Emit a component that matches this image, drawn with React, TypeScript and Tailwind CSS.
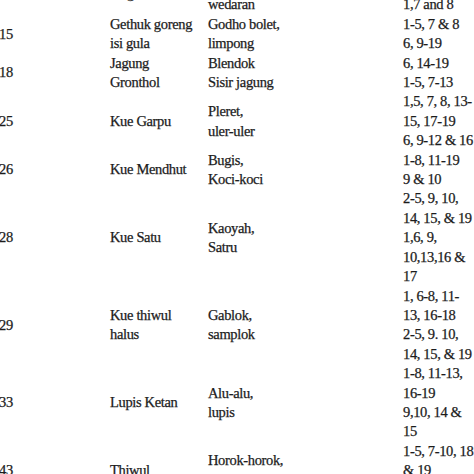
type Row = {
  no: string;
  name: string[];
  local: string[];
  sites: string[];
  lift?: boolean;
};

const rows: Row[] = [
  { no: "", name: ["Ang"], local: ["Gethuk", "wedaran"], sites: ["9-19", "1,7 and 8"], lift: true },
  { no: "15", name: ["Gethuk goreng", "isi gula"], local: ["Godho bolet,", "limpong"], sites: ["1-5, 7 & 8", "6, 9-19"] },
  { no: "18", name: ["Jagung", "Gronthol"], local: ["Blendok", "Sisir jagung"], sites: ["6, 14-19", "1-5, 7-13"] },
  { no: "25", name: ["Kue Garpu"], local: ["Pleret,", "uler-uler"], sites: ["1,5, 7, 8, 13-", "15, 17-19", "6, 9-12 & 16"] },
  { no: "26", name: ["Kue Mendhut"], local: ["Bugis,", "Koci-koci"], sites: ["1-8, 11-19", "9 & 10"] },
  {
    no: "28",
    name: ["Kue Satu"],
    local: ["Kaoyah,", "Satru"],
    sites: ["2-5, 9, 10,", "14, 15, & 19", "1,6, 9,", "10,13,16 &", "17"],
  },
  {
    no: "29",
    name: ["Kue thiwul", "halus"],
    local: ["Gablok,", "samplok"],
    sites: ["1, 6-8, 11-", "13, 16-18", "2-5, 9. 10,", "14, 15, & 19"],
  },
  {
    no: "33",
    name: ["Lupis Ketan"],
    local: ["Alu-alu,", "lupis"],
    sites: ["1-8, 11-13,", "16-19", "9,10, 14 &", "15"],
  },
  { no: "43", name: ["Thiwul"], local: ["Horok-horok,", "horok"], sites: ["1-5, 7-10, 18", "& 19", "\u00a0"] },
];

function Lines({ items, className = "" }: { items: string[]; className?: string }) {
  return (
    <div className={`flex flex-col ${className}`}>
      {items.map((t, i) => (
        <span key={i} className="whitespace-nowrap">
          {t}
        </span>
      ))}
    </div>
  );
}

export default function App() {
  return (
    <div className="h-[474px] w-[474px] overflow-hidden bg-white">
      <div
        className="-mt-[24px] -ml-[1px] grid grid-cols-[111px_98px_195px_1fr] items-center text-[14.5px] leading-[19.4px] tracking-[-0.35px] text-[#1c1c1c] [-webkit-text-stroke:0.25px_#1c1c1c]"
        style={{ fontFamily: '"Liberation Serif", "Times New Roman", serif' }}
      >
        {rows.map((r, i) => (
          <div key={i} className="contents">
            <div>{r.no}</div>
            <Lines items={r.name} className={r.lift ? "pb-[4px]" : ""} />
            <Lines items={r.local} />
            <Lines items={r.sites} />
          </div>
        ))}
      </div>
    </div>
  );
}
